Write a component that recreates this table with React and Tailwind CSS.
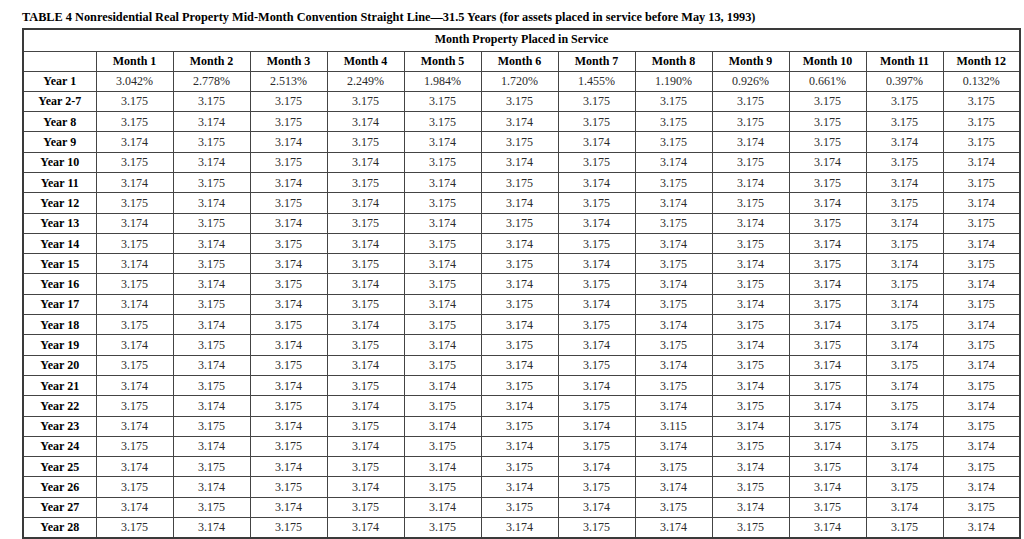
const firstRow = ['3.042%', '2.778%', '2.513%', '2.249%', '1.984%', '1.720%', '1.455%', '1.190%', '0.926%', '0.661%', '0.397%', '0.132%']

const months = Array.from({ length: 12 }, (_, i) => `Month ${i + 1}`)

function rowValues(start) {
  // alternating 3.175 / 3.174 pattern
  return Array.from({ length: 12 }, (_, i) => ((i % 2 === 0) === (start === 5) ? '3.175' : '3.174'))
}

const rows = [
  { label: 'Year 1', values: firstRow },
  { label: 'Year 2-7', values: Array(12).fill('3.175') },
  { label: 'Year 8', values: ['3.175', '3.174', '3.175', '3.174', '3.175', '3.174', '3.175', '3.175', '3.175', '3.175', '3.175', '3.175'] },
  { label: 'Year 9', values: ['3.174', '3.175', '3.174', '3.175', '3.174', '3.175', '3.174', '3.175', '3.174', '3.175', '3.174', '3.175'] },
]

for (let y = 10; y <= 28; y++) {
  const values = rowValues(y % 2 === 0 ? 5 : 4)
  if (y === 23) values[7] = '3.115'
  rows.push({ label: `Year ${y}`, values })
}

export default function App() {
  return (
    <div className="bg-white w-[1024px] h-[539px] pl-[22px] pt-[10px] font-['Liberation_Serif',serif] text-black">
      <h1 className="text-[12.3px] font-bold leading-[14px] mb-[4px]">
        TABLE 4 Nonresidential Real Property Mid-Month Convention Straight Line—31.5 Years (for assets placed in service before May 13, 1993)
      </h1>
      <table className="w-[997px] table-fixed border-collapse border-2 border-[#3a3a3a] text-[12px] leading-[14px]">
        <colgroup>
          <col className="w-[73px]" />
          {months.map(m => (
            <col key={m} className="w-[77px]" />
          ))}
        </colgroup>
        <thead>
          <tr className="h-[22px]">
            <th colSpan={13} className="border border-[#444] font-bold text-center align-middle pb-[3px]">
              Month Property Placed in Service
            </th>
          </tr>
          <tr className="h-[20px]">
            <th className="border border-[#444]"></th>
            {months.map(m => (
              <th key={m} className="border border-[#444] font-bold text-center">
                {m}
              </th>
            ))}
          </tr>
        </thead>
        <tbody>
          {rows.map(r => (
            <tr key={r.label} className="h-[20.3px]">
              <td className="border border-[#444] font-bold text-center">{r.label}</td>
              {r.values.map((v, i) => (
                <td key={i} className="border border-[#444] text-center text-[#2a2a2a]">
                  {v}
                </td>
              ))}
            </tr>
          ))}
        </tbody>
      </table>
    </div>
  )
}
